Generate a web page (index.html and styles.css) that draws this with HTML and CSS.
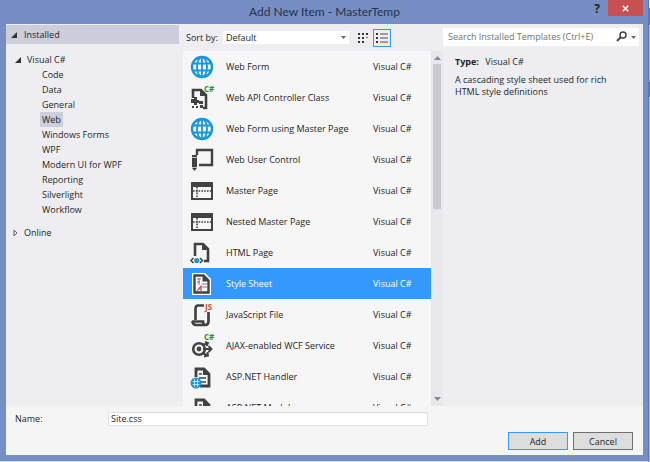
FILE: index.html
```
<!DOCTYPE html>
<html lang="en">
<head>
  <meta charset="UTF-8" />
  <title>Add New Item - MasterTemp</title>
  <link rel="stylesheet" href="styles.css">
</head>
<body>

<!-- Shared item icons -->
<svg class="icon-defs" aria-hidden="true">
  <symbol id="globe" viewBox="0 0 24 24">
    <g fill="none" stroke="#1797d9" stroke-width="1.8">
      <circle cx="12" cy="12" r="10" stroke-width="2.4" />
      <ellipse cx="12" cy="12" rx="5" ry="10" />
      <path d="M12 2v20M3 8.500h18M3 15.500h18" />
    </g>
  </symbol>
  <symbol id="master" viewBox="0 0 24 24">
    <path d="M1 3h22v18H1z" fill="#424242" />
    <path d="M3 8h18v11H3z" fill="#f5f5f5" />
    <path d="M3 12h18" stroke="#424242" stroke-width="1.6" stroke-dasharray="1.6 1.2" />
    <path d="M7 8v11" stroke="#424242" stroke-width="1.6" stroke-dasharray="1.6 1.2" />
  </symbol>
  <symbol id="textpage" viewBox="0 0 24 24">
    <path d="M6 12V4h8l5 5v12h-9" fill="none" stroke="#424242" stroke-width="2.8" />
    <path d="M13 3v7h7z" fill="#424242" />
    <path d="M9 9h3M9 13h7M11 17h5" stroke="#424242" stroke-width="1.6" />
    <circle cx="6" cy="18" r="5.5" fill="#1797d9" />
    <path d="M2.500 16.500h7M2.500 19.500h7M4.500 14v8M7.500 14v8" stroke="#d5edf8" stroke-width=".8" />
  </symbol>
</svg>

<div class="window">
  <header class="titlebar">
    <h1>Add New Item - MasterTemp</h1>
    <div class="window-buttons">
      <button class="help" aria-label="Help">?</button>
      <button class="close" aria-label="Close">
        <svg width="7" height="7" viewBox="0 0 7 7"><path d="M.8.8l5.400 5.400M6.200.8L.8 6.200" stroke="#fff" stroke-width="1.5" /></svg>
      </button>
    </div>
  </header>

  <main class="content">
    <!-- Category tree -->
    <nav class="sidebar">
      <button class="installed"><svg width="6" height="6" viewBox="0 0 6 6"><path d="M6 0v6H0z" fill="#333" /></svg>Installed</button>
      <button class="node"><svg width="6" height="6" viewBox="0 0 6 6"><path d="M6 0v6H0z" fill="#333" /></svg>Visual C#</button>
      <ul class="categories">
        <li><a href="#">Code</a></li>
        <li><a href="#">Data</a></li>
        <li><a href="#">General</a></li>
        <li><a href="#" class="active">Web</a></li>
        <li><a href="#">Windows Forms</a></li>
        <li><a href="#">WPF</a></li>
        <li><a href="#">Modern UI for WPF</a></li>
        <li><a href="#">Reporting</a></li>
        <li><a href="#">Silverlight</a></li>
        <li><a href="#">Workflow</a></li>
      </ul>
      <button class="online"><svg width="6" height="8" viewBox="0 0 6 8"><path d="M1 1v6l3-3z" fill="none" stroke="#666" /></svg>Online</button>
    </nav>

    <!-- Templates -->
    <section class="templates">
      <div class="toolbar">
        <label for="sort">Sort by:</label>
        <div class="sort">
          <select id="sort">
            <option>Default</option>
          </select>
          <svg width="5" height="3" viewBox="0 0 5 3"><path d="M0 0h5L2.500 3z" fill="#666" /></svg>
        </div>
        <button class="view" aria-label="Small icons">
          <svg width="12" height="12" viewBox="0 0 12 12"><path d="M1 1h2v2H1zM5 1h2v2H5zM9 1h2v2H9zM1 5h2v2H1zM5 5h2v2H5zM1 9h2v2H1zM5 9h2v2H5z" fill="#333" /><path d="M9 5h2v1H9z" fill="#777" /></svg>
        </button>
        <button class="view active" aria-label="Medium icons">
          <svg width="12" height="12" viewBox="0 0 12 12"><path d="M0 1h2v2H0zM0 5h2v2H0zM0 9h2v2H0z" fill="#333" /><path d="M4 2h8M4 6h8M4 10h8" stroke="#8b7f86" stroke-width="1.4" /></svg>
        </button>
      </div>
      <div class="list-wrapper">
        <div class="list">
          <button class="item">
            <svg><use href="#globe" /></svg>
            <span>Web Form</span><span>Visual C#</span>
          </button>
          <button class="item">
            <svg viewBox="0 0 24 24">
              <path d="M3 12V4h8l5 5v13h-3" fill="none" stroke="#424242" stroke-width="2.6" />
              <path d="M10 3v7h7z" fill="#424242" />
              <path d="M1 13h3v-2h3v3h2v3H7v2H4v-2H1zM9 15h4v3H9zM10 19h3v3h-3zM2 20h2v2H2zM6 20h2v2H6z" fill="#424242" />
              <text x="14" y="6" class="tag green">C#</text>
            </svg>
            <span>Web API Controller Class</span><span>Visual C#</span>
          </button>
          <button class="item">
            <svg><use href="#globe" /></svg>
            <span>Web Form using Master Page</span><span>Visual C#</span>
          </button>
          <button class="item">
            <svg viewBox="0 0 24 24">
              <path d="M7 7V2h15v15H9" fill="none" stroke="#424242" stroke-width="2.4" />
              <path d="M2 7h5v13l-2.500 3L2 20z" fill="#424242" />
              <path d="M2 9.500h5M2 19.500h5" stroke="#f5f5f5" stroke-width=".7" />
            </svg>
            <span>Web User Control</span><span>Visual C#</span>
          </button>
          <button class="item">
            <svg><use href="#master" /></svg>
            <span>Master Page</span><span>Visual C#</span>
          </button>
          <button class="item">
            <svg><use href="#master" /></svg>
            <span>Nested Master Page</span><span>Visual C#</span>
          </button>
          <button class="item">
            <svg viewBox="0 0 24 24">
              <path d="M5 15V3h8l5 5v12h-4" fill="none" stroke="#424242" stroke-width="2.6" />
              <path d="M12 2v7h7z" fill="#424242" />
              <path d="M3.500 17L1 19.500 3.500 22M10 17l2.500 2.500L10 22" fill="none" stroke="#424242" stroke-width="1.5" />
              <circle cx="6.800" cy="19.500" r="2.6" fill="#1797d9" />
            </svg>
            <span>HTML Page</span><span>Visual C#</span>
          </button>
          <button class="item active">
            <svg viewBox="0 0 24 24">
              <path d="M2 1h13l6 6v16H2z" fill="#fff" />
              <path d="M4.500 3.500h9l5 5v12h-14z" fill="#fff" stroke="#424242" stroke-width="2.4" />
              <path d="M12.500 3v6.500H19z" fill="#424242" />
              <path d="M7 7h4M9 6v7M12 12h5M12 15h5M7 10h3" stroke="#777" />
              <path d="M7 19l4-5v5M8.500 17H11" fill="none" stroke="#d44352" stroke-width="1.2" />
            </svg>
            <span>Style Sheet</span><span>Visual C#</span>
          </button>
          <button class="item">
            <svg viewBox="0 0 24 24">
              <path d="M14 2.500H8Q5.500 2.500 5.500 6v11M2 18.500h11q0 3.500 2.500 3.500 3 0 3-4V9M2.500 18q0 4 4 4H16" fill="none" stroke="#424242" stroke-width="2.7" />
              <text x="15" y="7" class="tag red">JS</text>
            </svg>
            <span>JavaScript File</span><span>Visual C#</span>
          </button>
          <button class="item">
            <svg viewBox="0 0 24 24">
              <circle cx="9" cy="15" r="5.8" fill="none" stroke="#424242" stroke-width="2.6" />
              <circle cx="9" cy="15" r="2.4" fill="#424242" />
              <path d="M13 15h8M18.500 12l3 3-3 3M13 10.500l4-1M15 8l3 1-1.500 3M13 19.500l4 1.500M17.500 18l.5 3.500-4 1" fill="none" stroke="#424242" stroke-width="1.9" />
              <text x="14" y="6" class="tag green">C#</text>
            </svg>
            <span>AJAX-enabled WCF Service</span><span>Visual C#</span>
          </button>
          <button class="item">
            <svg><use href="#textpage" /></svg>
            <span>ASP.NET Handler</span><span>Visual C#</span>
          </button>
          <button class="item">
            <svg><use href="#textpage" /></svg>
            <span>ASP.NET Module</span><span>Visual C#</span>
          </button>
        </div>
        <div class="scrollbar">
          <svg width="7" height="4" viewBox="0 0 7 4"><path d="M0 4h7L3.500 0z" fill="#868999" /></svg>
          <div class="track"><div class="thumb"></div></div>
          <svg width="7" height="4" viewBox="0 0 7 4"><path d="M0 0h7L3.500 4z" fill="#868999" /></svg>
        </div>
      </div>
    </section>

    <!-- Details of the selected template -->
    <aside class="details">
      <div class="search">
        <input type="text" placeholder="Search Installed Templates (Ctrl+E)" aria-label="Search Installed Templates">
        <button aria-label="Search">
          <svg width="20" height="12" viewBox="0 0 20 12">
            <circle cx="7" cy="4" r="3" fill="none" stroke="#444" stroke-width="1.5" />
            <path d="M5 6L1 10" stroke="#444" stroke-width="2" />
            <path d="M15 5h5l-2.500 3z" fill="#666" />
          </svg>
        </button>
      </div>
      <p class="type"><strong>Type:</strong> Visual C#</p>
      <p>A cascading style sheet used for rich HTML style definitions</p>
    </aside>
  </main>

  <footer class="footer">
    <div class="name-row">
      <label for="name">Name:</label>
      <input type="text" id="name" value="Site.css">
    </div>
    <div class="actions">
      <button class="add">Add</button>
      <button>Cancel</button>
    </div>
  </footer>
</div>

</body>
</html>
```

FILE: styles.css
```
* {
  box-sizing: border-box;
}

body {
  margin: 0;
  background: linear-gradient(#f0f3fa 8px, #2f86d0 8px, #2f86d0 25px, #a9bce0 25px, #a9bce0 82px, #3d82cf 82px, #3d82cf 97px, #a9bce0 97px);
  font-family: "Open Sans", "Noto Sans", sans-serif;
  font-size: 9px;
  line-height: 15px;
  color: #1e1e1e;
}

button,
input,
select {
  font: inherit;
  color: inherit;
  border: none;
  background: none;
  padding: 0;
  margin: 0;
}

p {
  margin: 0;
}

.icon-defs {
  position: absolute;
  width: 0;
  height: 0;
}

.window {
  display: flex;
  flex-direction: column;
  height: 100vh;
  margin-right: 1px;
  padding: 0 5px 6px 6px;
  background: #758ec3;
  border-right: 1px solid #5f78ad;
  border-bottom: 1px solid #d5def0;
}

.titlebar {
  display: grid;
  grid-template-columns: 1fr auto 1fr;
  height: 24px;
  flex-shrink: 0;
}

.titlebar h1 {
  grid-column: 2;
  margin: 0;
  font-family: Lato, "Open Sans", sans-serif;
  font-size: 12px;
  line-height: 24px;
  font-weight: normal;
  color: #26314a;
}

.window-buttons {
  display: flex;
  justify-content: flex-end;
  align-items: flex-start;
}

.help {
  width: 22px;
  height: 16px;
  font-weight: bold;
  font-size: 12px;
}

.close {
  display: flex;
  align-items: center;
  justify-content: center;
  width: 35px;
  height: 16px;
  background: #c75050;
}

.content {
  display: flex;
  flex: 1;
  min-height: 0;
  background: #eeeef2;
}

/* sidebar */
.sidebar {
  width: 177px;
  padding: 1px 4px 0 0;
}

.sidebar button {
  display: flex;
  align-items: center;
  gap: 7px;
}

.sidebar .installed {
  width: 100%;
  height: 19px;
  padding-left: 5px;
  background: #cccedb;
}

.sidebar .node {
  gap: 6px;
  margin-top: 8px;
  padding-left: 9px;
}

.categories {
  list-style: none;
  margin: 0;
  padding: 0 0 0 34px;
}

.categories a {
  display: inline-block;
  padding: 0 2px;
  color: inherit;
  text-decoration: none;
  vertical-align: top;
}

.categories .active {
  background: #cccedb;
}

.sidebar .online {
  gap: 5px;
  margin-top: 8px;
  padding-left: 7px;
}

/* template list */
.templates {
  display: flex;
  flex-direction: column;
  flex: 1;
}

.toolbar {
  display: flex;
  align-items: center;
  height: 27px;
  padding-left: 3px;
}

.sort {
  display: flex;
  align-items: center;
  width: 126px;
  height: 13px;
  margin: 0 5px;
  padding-right: 3px;
  background: #fff;
}

.sort select {
  appearance: none;
  flex: 1;
  padding-left: 3px;
}

.view {
  display: flex;
  align-items: center;
  justify-content: center;
  width: 18px;
  height: 18px;
}

.view.active {
  margin-left: 1px;
  border: 1px solid #3399ff;
}

.list-wrapper {
  display: flex;
  flex: 1;
  min-height: 0;
}

.list {
  flex: 1;
  overflow: hidden;
  background: #f6f6f6;
}

.item {
  display: grid;
  grid-template-columns: 24px 1fr 38px;
  gap: 12px;
  align-items: center;
  width: 100%;
  height: 31px;
  padding: 0 20px 0 7px;
  text-align: left;
  white-space: nowrap;
}

.item svg {
  width: 24px;
  height: 24px;
  overflow: visible;
}

.item.active {
  background: #3399ff;
  color: #fff;
}

.tag {
  font-size: 8px;
  font-weight: bold;
}

.green {
  fill: #388a34;
}

.red {
  fill: #e04a28;
}

.scrollbar {
  display: flex;
  flex-direction: column;
  align-items: center;
  width: 12px;
  padding: 5px 0;
  background: #e8e8ec;
}

.track {
  flex: 1;
  padding: 4px 0;
}

.thumb {
  width: 8px;
  height: 44%;
  background: #c9c9d2;
}

/* details */
.details {
  width: 200px;
  padding: 4px 4px 0 0;
  line-height: 12px;
}

.details p {
  padding: 6px 10px 0 12px;
}

.details .type {
  padding-top: 10px;
}

.type strong {
  margin-right: 4px;
}

.search {
  display: flex;
  align-items: center;
  height: 18px;
  padding: 0 3px 0 5px;
  background: #fff;
}

.search input {
  flex: 1;
  min-width: 0;
}

.search input::placeholder {
  color: #717171;
}

.search button {
  display: flex;
}

/* footer */
.footer {
  flex-shrink: 0;
  padding: 5px 10px 5px 9px;
  background: #f5f5f5;
}

.name-row {
  display: flex;
  align-items: center;
}

.name-row label {
  width: 93px;
}

.name-row input {
  width: 320px;
  height: 14px;
  padding: 0 2px;
  background: #fff;
  border: 1px solid #e0e0e4;
}

.actions {
  display: flex;
  justify-content: flex-end;
  gap: 5px;
  margin-top: 6px;
}

.actions button {
  width: 60px;
  height: 18px;
  background: #dddddd;
  border: 1px solid #707070;
}

.actions .add {
  border-color: #3399ff;
}
```
